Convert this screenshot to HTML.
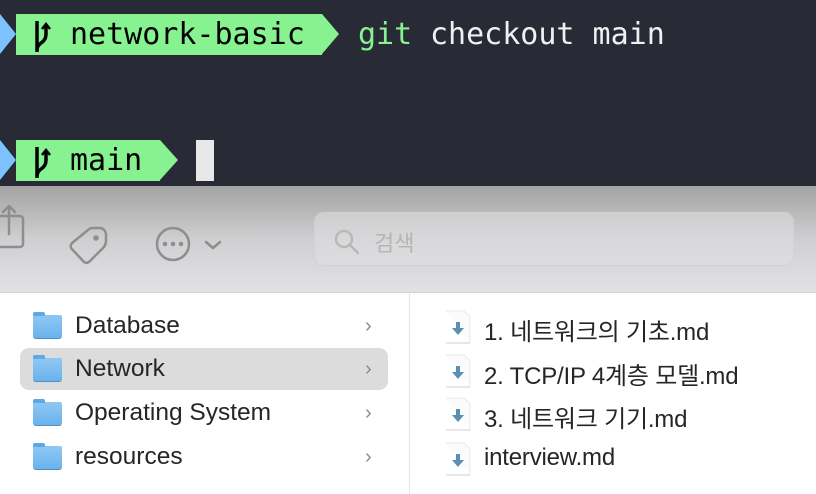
<!DOCTYPE html>
<html><head><meta charset="utf-8"><style>
body{margin:0;width:816px;height:494px;overflow:hidden;background:#fff;position:relative;font-family:"Liberation Sans","Noto Sans CJK KR",sans-serif}
.term{position:absolute;left:0;top:0;width:816px;height:186px;background:#282a36}
.mono{font-family:"DejaVu Sans Mono","Liberation Mono",monospace;font-size:30px;position:absolute;white-space:pre}
.bar{position:absolute;height:41px;background:#86f290}
.tb{position:absolute;left:0;top:186px;width:816px;height:106px;background:linear-gradient(#a3a3a3,#cfcfd1 50%,#e2e1e5);border-bottom:1px solid #d4d4d4}
.row{position:absolute;left:20px;width:368px;height:42px}
.row span{position:absolute;left:55px;top:7px;font-size:24.5px;color:#262626;white-space:nowrap}
.chev{position:absolute;left:345px;top:10px;color:#8a8a8a;font-size:20px}
.fold{position:absolute;left:13px;top:10px;width:29px;height:23px;background:linear-gradient(#8ec8f5,#6cb2ec);border-radius:2px 2px 3px 3px;border-bottom:1px solid #4f8fc8}
.fold::before{content:"";position:absolute;left:0;top:-3px;width:12px;height:4px;background:#5fa8e6;border-radius:2px 2px 0 0}
.file{position:absolute;left:445px;width:360px;height:40px}
.file span{position:absolute;left:39px;top:6px;font-size:24px;color:#262626;white-space:nowrap;letter-spacing:-0.2px}
.file svg{position:absolute;left:0;top:4px}
</style></head><body>
<div class="term">
 <div style="position:absolute;left:0;top:14px;width:0;height:0;border-top:20.5px solid transparent;border-bottom:20.5px solid transparent;border-left:16px solid #7cc2ff"></div>
 <div class="bar" style="left:16px;top:14px;width:306px"></div>
 <div style="position:absolute;left:322px;top:14px;border-top:20.5px solid transparent;border-bottom:20.5px solid transparent;border-left:17px solid #86f290"></div>
 <svg style="position:absolute;left:30px;top:14px" width="24" height="41" fill="none" stroke="#000" stroke-width="3.5"><path d="M7 7 V38"/><path d="M16 12 V20 Q16 26 11 29 Q7 32 7 36" /><path d="M12 15 L16 10 L20 15" stroke-width="2.5"/></svg>
 <div class="mono" style="left:70px;top:14px;line-height:41px;color:#000">network-basic</div>
 <div class="mono" style="left:358px;top:14px;line-height:41px;color:#86f290">git</div>
 <div class="mono" style="left:430px;top:14px;line-height:41px;color:#f0f0f0">checkout main</div>
 <div style="position:absolute;left:0;top:140px;border-top:20.5px solid transparent;border-bottom:20.5px solid transparent;border-left:16px solid #7cc2ff"></div>
 <div class="bar" style="left:16px;top:140px;width:144px"></div>
 <div style="position:absolute;left:160px;top:140px;border-top:20.5px solid transparent;border-bottom:20.5px solid transparent;border-left:18px solid #86f290"></div>
 <svg style="position:absolute;left:30px;top:140px" width="24" height="41" fill="none" stroke="#000" stroke-width="3.5"><path d="M7 7 V38"/><path d="M16 12 V20 Q16 26 11 29 Q7 32 7 36" /><path d="M12 15 L16 10 L20 15" stroke-width="2.5"/></svg>
 <div class="mono" style="left:70px;top:140px;line-height:41px;color:#000">main</div>
 <div style="position:absolute;left:196px;top:140px;width:18px;height:41px;background:#e8e8e8"></div>
</div>
<div class="tb">
 <svg width="816" height="106" style="position:absolute;left:0;top:0" fill="none" stroke="#8e8e8e" stroke-width="2.5" stroke-linecap="round" stroke-linejoin="round">
  <path d="M-2 30 H20 a3 3 0 0 1 3 3 V58 a3 3 0 0 1 -3 3 H-2"/><path d="M9 48 V20 M3 26 L9 20 L15 26"/>
  <path d="M71 62 L84 76 Q87 78 90 75 L104 61 Q106 58 106 55 V48 Q105 43 101 42 L93 42 Q90 42 88 44 L72 57 Q70 60 71 62 Z"/><circle cx="96" cy="52" r="1.5" fill="#8e8e8e"/>
  <circle cx="173" cy="58" r="16"/>
  <path d="M206 56 L213 62 L220 56"/>
  <circle cx="344" cy="53" r="8"/><path d="M350 59 L358 67"/>
 </svg>
 <svg width="816" height="106" style="position:absolute;left:0;top:0"><circle cx="165" cy="58" r="2.3" fill="#8e8e8e"/><circle cx="173" cy="58" r="2.3" fill="#8e8e8e"/><circle cx="181" cy="58" r="2.3" fill="#8e8e8e"/></svg>
 <div style="position:absolute;left:314px;top:26px;width:480px;height:54px;border:1.5px solid #d2d2d4;border-radius:10px;box-sizing:border-box;background:rgba(225,225,228,.5)"></div>
 <div style="position:absolute;left:374px;top:40px;font-size:22px;color:#b5b5b5">검색</div>
</div>
<div style="position:absolute;left:409px;top:293px;width:1px;height:201px;background:#e5e5e5"></div>
<div class="row" style="top:305px"><div class="fold"></div><span>Database</span><div class="chev">›</div></div>
<div class="row" style="top:348px;background:#dcdcdc;border-radius:9px"><div class="fold"></div><span>Network</span><div class="chev">›</div></div>
<div class="row" style="top:392px"><div class="fold"></div><span>Operating System</span><div class="chev">›</div></div>
<div class="row" style="top:436px"><div class="fold"></div><span>resources</span><div class="chev">›</div></div>
<div class="file" style="top:306px"><svg width="28" height="34"><path d="M1 1 H19 L25 7 V33" fill="#fbfbfb" stroke="#e8e8e8"/><path d="M1 33 H25" stroke="#cfcfcf"/><path d="M11 12 H15 V18 H19 L13 25 L7 18 H11 Z" fill="#5a8fb4"/></svg><span>1. 네트워크의 기초.md</span></div>
<div class="file" style="top:350px"><svg width="28" height="34"><path d="M1 1 H19 L25 7 V33" fill="#fbfbfb" stroke="#e8e8e8"/><path d="M1 33 H25" stroke="#cfcfcf"/><path d="M11 12 H15 V18 H19 L13 25 L7 18 H11 Z" fill="#5a8fb4"/></svg><span>2. TCP/IP 4계층 모델.md</span></div>
<div class="file" style="top:393px"><svg width="28" height="34"><path d="M1 1 H19 L25 7 V33" fill="#fbfbfb" stroke="#e8e8e8"/><path d="M1 33 H25" stroke="#cfcfcf"/><path d="M11 12 H15 V18 H19 L13 25 L7 18 H11 Z" fill="#5a8fb4"/></svg><span>3. 네트워크 기기.md</span></div>
<div class="file" style="top:438px"><svg width="28" height="34"><path d="M1 1 H19 L25 7 V33" fill="#fbfbfb" stroke="#e8e8e8"/><path d="M1 33 H25" stroke="#cfcfcf"/><path d="M11 12 H15 V18 H19 L13 25 L7 18 H11 Z" fill="#5a8fb4"/></svg><span>interview.md</span></div>
</body></html>
